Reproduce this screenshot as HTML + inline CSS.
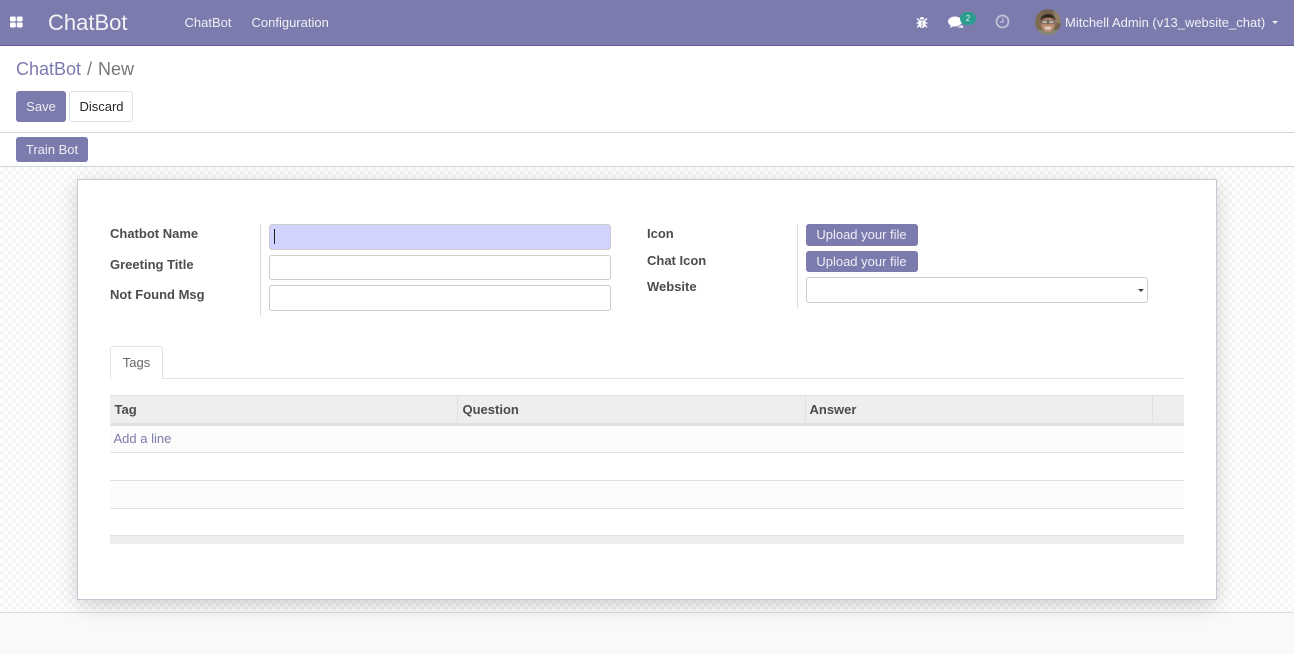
<!DOCTYPE html>
<html><head><meta charset="utf-8"><style>
html,body{margin:0;padding:0;width:1294px;height:654px;overflow:hidden;background:#fff;font-family:"Liberation Sans",sans-serif;font-size:13px;color:#4c4c4c}
.a{position:absolute;white-space:nowrap}
.btn{position:absolute;background:#7c7bad;color:#fff;border-radius:3px;text-align:center;box-sizing:border-box;text-indent:-1px}
.lab{position:absolute;font-weight:bold;left:0;white-space:nowrap;line-height:16px}
.inp{position:absolute;box-sizing:border-box;background:#fff;border:1px solid #ccc;border-radius:3px}
.th{position:absolute;top:395px;height:29px;line-height:29px;font-weight:bold;box-sizing:border-box;padding-left:4.500px;border-right:1px solid #dee2e6}
.hl{position:absolute;left:110px;width:1074px;height:1px;background:#dee2e6}
</style></head><body>
<div class="a" style="left:0;top:0;width:1294px;height:45px;background:#7c7bad;border-bottom:1px solid #5f5e97"></div>
<svg class="a" style="left:10px;top:16px" width="13" height="12"><rect x="0" y="0.500" width="5.800" height="5" rx="1.200" fill="#fff"/><rect x="6.800" y="0.500" width="5.800" height="5" rx="1.200" fill="#fff"/><rect x="0" y="6.500" width="5.800" height="5" rx="1.200" fill="#fff"/><rect x="6.800" y="6.500" width="5.800" height="5" rx="1.200" fill="#fff"/></svg>
<div class="a" style="left:48px;top:9px;font-size:22px;line-height:27px;color:#f2f2f7">ChatBot</div>
<div class="a" style="left:184.500px;top:14px;line-height:17px;color:#f0f0f6">ChatBot</div>
<div class="a" style="left:251.500px;top:14px;line-height:17px;color:#f0f0f6">Configuration</div>
<svg class="a" style="left:915px;top:15px" width="14" height="14" viewBox="0 0 14 14"><path d="M4.500 4.500a2.500 2.500 0 0 1 5 0zM3.500 5.500h7v4a3.500 3.500 0 0 1-7 0z" fill="#fff"/><path d="M2 3.500l2 2M12 3.500l-2 2M1.500 8h2.500M12.500 8h-2.500M2 12.500l2-2.500M12 12.500l-2-2.500" stroke="#fff" stroke-width="1.300" fill="none"/><path d="M7 6.500v6" stroke="#7c7bad" stroke-width=".9"/></svg>
<svg class="a" style="left:948px;top:15px" width="17" height="15" viewBox="0 0 17 15"><ellipse cx="7" cy="6.500" rx="7" ry="5" fill="#fff"/><path d="M3 10l-1 3 4-2z" fill="#fff"/><path d="M9 12.500h4.500l1.500 1-.5-3.500z" fill="#fff"/></svg>
<div class="a" style="left:960px;top:12px;width:16px;height:13px;border-radius:6.500px;background:#2a9d8f;color:#e8f5f3;font-size:8px;line-height:13px;text-align:center">2</div>
<svg class="a" style="left:995px;top:14px" width="15" height="15" viewBox="0 0 15 15"><circle cx="7.500" cy="7.500" r="6" fill="none" stroke="#c4c3dc" stroke-width="1.700"/><path d="M8 3.800v4.200h-3" fill="none" stroke="#c4c3dc" stroke-width="1.200"/></svg>
<svg class="a" style="left:1035px;top:9px" width="26" height="26" viewBox="0 0 26 26"><defs><clipPath id="c"><circle cx="13" cy="13" r="13"/></clipPath><filter id="b"><feGaussianBlur stdDeviation=".5"/></filter></defs><g clip-path="url(#c)"><g filter="url(#b)"><rect width="26" height="26" fill="#74634f"/><rect x="0" y="0" width="7" height="26" fill="#7d6a52"/><rect x="19" y="0" width="7" height="14" fill="#8e8068"/><rect x="0" y="21" width="26" height="5" fill="#87866f"/><ellipse cx="13" cy="14" rx="7" ry="9" fill="#c08e74"/><path d="M5.500 12c-1-9 15-10 15 0-2-4-12-4-15 0z" fill="#33271f"/><rect x="7" y="11.500" width="5.500" height="3" fill="#c9c2bc" stroke="#2d2622" stroke-width=".8"/><rect x="13.500" y="11.500" width="5.500" height="3" fill="#c9c2bc" stroke="#2d2622" stroke-width=".8"/><rect x="10" y="18" width="6" height="2" fill="#f0e0d8"/></g></g></svg>
<div class="a" style="left:1065px;top:14px;line-height:17px;color:#f0f0f6">Mitchell Admin (v13_website_chat)</div>
<div class="a" style="left:1272px;top:21px;width:0;height:0;border-left:3.500px solid transparent;border-right:3.500px solid transparent;border-top:3.500px solid #f0f0f6"></div>

<div class="a" style="left:16px;top:58px;font-size:18px;line-height:22px;color:#7c7bad">ChatBot</div>
<div class="a" style="left:87px;top:58px;font-size:18px;line-height:22px;color:#777">/</div>
<div class="a" style="left:98px;top:58px;font-size:18px;line-height:22px;color:#777">New</div>
<div class="btn" style="left:16px;top:91px;width:50px;height:31px;line-height:31px;color:#eeeef5;text-indent:0">Save</div>
<div class="a" style="left:69px;top:91px;width:64px;height:31px;box-sizing:border-box;border:1px solid #dee2e6;border-radius:3px;line-height:29px;text-align:center;color:#212529;background:#fff;text-indent:1px">Discard</div>
<div class="a" style="left:0;top:132px;width:1294px;height:1px;background:#ced4da"></div>
<div class="btn" style="left:16px;top:137px;width:72px;height:25px;line-height:25px;color:#eeeef5;text-indent:0">Train Bot</div>

<div class="a" style="left:0;top:166px;width:1294px;height:447px;box-sizing:border-box;border-top:1px solid #ced4da;border-bottom:1px solid #dcdcdc;background-color:#fff;background-image:repeating-conic-gradient(#f5f5f5 0 25%,#fff 0 50%);background-size:8px 8px"></div>
<div class="a" style="left:0;top:613px;width:1294px;height:41px;background:#f9f9f9"></div>

<div class="a" style="left:77px;top:179px;width:1140px;height:421px;box-sizing:border-box;background:#fff;border:1px solid #c9c6d6;box-shadow:0 5px 20px -1px rgba(0,0,0,.2)"></div>

<div class="a" style="left:110px;top:0;width:0;height:0">
<div class="lab" style="top:226px">Chatbot Name</div>
<div class="lab" style="top:257px">Greeting Title</div>
<div class="lab" style="top:287px">Not Found Msg</div>
<div class="lab" style="top:226px;left:537px">Icon</div>
<div class="lab" style="top:253px;left:537px">Chat Icon</div>
<div class="lab" style="top:279px;left:537px">Website</div>
</div>
<div class="a" style="left:260px;top:224px;width:1px;height:92px;background:#dcdcdc"></div>
<div class="inp" style="left:269px;top:224px;width:342px;height:26px;background:#d2d2ff"></div>
<div class="a" style="left:274px;top:229px;width:1px;height:15px;background:#222"></div>
<div class="inp" style="left:269px;top:255px;width:342px;height:25px"></div>
<div class="inp" style="left:269px;top:285px;width:342px;height:26px"></div>

<div class="a" style="left:797px;top:224px;width:1px;height:84px;background:#dcdcdc"></div>
<div class="btn" style="left:806px;top:224px;width:112px;height:22px;line-height:22px;color:#eeeef5">Upload your file</div>
<div class="btn" style="left:806px;top:251px;width:112px;height:21px;line-height:21px;color:#eeeef5">Upload your file</div>
<div class="inp" style="left:806px;top:277px;width:342px;height:26px"></div>
<div class="a" style="left:1138px;top:289px;width:0;height:0;border-left:3px solid transparent;border-right:3px solid transparent;border-top:3px solid #444"></div>

<div class="hl" style="top:378px"></div>
<div class="a" style="left:110px;top:346px;width:53px;height:33px;box-sizing:border-box;background:#fff;border:1px solid #dee2e6;border-bottom:none;border-radius:3px 3px 0 0;line-height:32px;text-align:center;color:#666">Tags</div>

<div class="a" style="left:110px;top:395px;width:1074px;height:29px;background:#eee;border-top:1px solid #e4e4e4;box-sizing:border-box"></div>
<div class="th" style="left:110px;width:348px">Tag</div>
<div class="th" style="left:458px;width:348px">Question</div>
<div class="th" style="left:806px;width:347px;padding-left:3.500px">Answer</div>
<div class="a" style="left:110px;top:423px;width:1074px;height:3px;background:#dee2e6"></div>
<div class="a" style="left:110px;top:426px;width:1074px;height:26px;background:#fcfcfc"></div>
<div class="a" style="left:113.500px;top:431px;line-height:16px;color:#7c7bad">Add a line</div>
<div class="hl" style="top:452px"></div>
<div class="hl" style="top:480px"></div>
<div class="a" style="left:110px;top:481px;width:1074px;height:27px;background:#fcfcfc"></div>
<div class="hl" style="top:508px"></div>
<div class="a" style="left:110px;top:535px;width:1074px;height:9px;background:#eee;border-top:1px solid #dee2e6;box-sizing:border-box"></div>
</body></html>
